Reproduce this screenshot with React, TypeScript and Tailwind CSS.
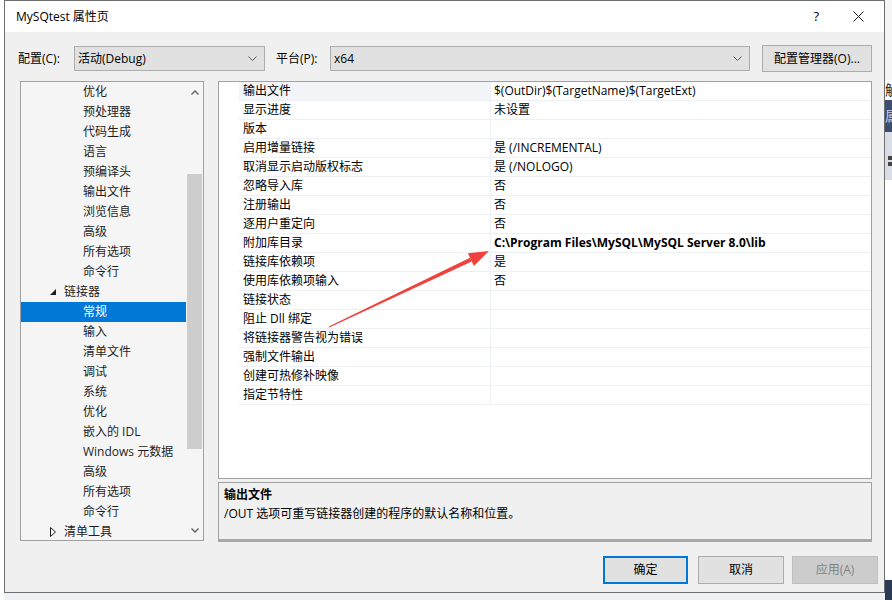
import React from 'react';

type TreeItem = {
  label: string;
  level: 1 | 2;
  selected?: boolean;
  expanded?: boolean;
  collapsed?: boolean;
};

const treeItems: TreeItem[] = [
  { label: '优化', level: 2 },
  { label: '预处理器', level: 2 },
  { label: '代码生成', level: 2 },
  { label: '语言', level: 2 },
  { label: '预编译头', level: 2 },
  { label: '输出文件', level: 2 },
  { label: '浏览信息', level: 2 },
  { label: '高级', level: 2 },
  { label: '所有选项', level: 2 },
  { label: '命令行', level: 2 },
  { label: '链接器', level: 1, expanded: true },
  { label: '常规', level: 2, selected: true },
  { label: '输入', level: 2 },
  { label: '清单文件', level: 2 },
  { label: '调试', level: 2 },
  { label: '系统', level: 2 },
  { label: '优化', level: 2 },
  { label: '嵌入的 IDL', level: 2 },
  { label: 'Windows 元数据', level: 2 },
  { label: '高级', level: 2 },
  { label: '所有选项', level: 2 },
  { label: '命令行', level: 2 },
  { label: '清单工具', level: 1, collapsed: true },
];

const props: [string, string, boolean?][] = [
  ['输出文件', '$(OutDir)$(TargetName)$(TargetExt)'],
  ['显示进度', '未设置'],
  ['版本', ''],
  ['启用增量链接', '是 (/INCREMENTAL)'],
  ['取消显示启动版权标志', '是 (/NOLOGO)'],
  ['忽略导入库', '否'],
  ['注册输出', '否'],
  ['逐用户重定向', '否'],
  ['附加库目录', 'C:\\Program Files\\MySQL\\MySQL Server 8.0\\lib', true],
  ['链接库依赖项', '是'],
  ['使用库依赖项输入', '否'],
  ['链接状态', ''],
  ['阻止 Dll 绑定', ''],
  ['将链接器警告视为错误', ''],
  ['强制文件输出', ''],
  ['创建可热修补映像', ''],
  ['指定节特性', ''],
];

const Chevron = () => (
  <svg width="9" height="5" viewBox="0 0 9 5" className="shrink-0">
    <polyline points="0.5,0.5 4.5,4.5 8.5,0.5" fill="none" stroke="#5a5a5a" strokeWidth="1" />
  </svg>
);

const Combo = ({ text, width }: { text: string; width: string }) => (
  <div className={`${width} shrink-0 h-[25px] flex items-center justify-between bg-[#e1e1e1] border border-[#adadad] pl-[3px] pr-[7px]`}>
    <span>{text}</span>
    <Chevron />
  </div>
);

const TreeRow = ({ item }: { item: TreeItem }) => (
  <div
    className={`h-[20px] leading-[20px] flex items-center whitespace-nowrap ${
      item.selected ? 'bg-[#0078d7] text-white' : 'text-[#1e1e1e]'
    }`}
  >
    {item.level === 1 ? (
      <>
        <div className="pl-[29px] w-[43px] shrink-0 flex items-center">
          {item.expanded ? (
            <svg width="6" height="6" viewBox="0 0 6 6">
              <polygon points="6,0 6,6 0,6" fill="#1e1e1e" />
            </svg>
          ) : (
            <svg width="6" height="10" viewBox="0 0 6 10">
              <polygon points="0.5,0.5 5.5,5 0.5,9.5" fill="none" stroke="#1e1e1e" strokeWidth="1" />
            </svg>
          )}
        </div>
        <span>{item.label}</span>
      </>
    ) : (
      <span className="pl-[62px]">{item.label}</span>
    )}
  </div>
);

const Btn = ({ label, primary, disabled, w, ml }: { label: string; primary?: boolean; disabled?: boolean; w: string; ml: string }) => (
  <div
    className={`${w} ${ml} h-[28px] flex items-center justify-center ${
      primary
        ? 'border-2 border-[#0078d7] bg-[#e1e1e1] text-black'
        : disabled
        ? 'border border-[#bfbfbf] bg-[#cccccc] text-[#838383]'
        : 'border border-[#adadad] bg-[#e1e1e1] text-black'
    }`}
  >
    {label}
  </div>
);

export default function App() {
  return (
    <div className="relative w-[892px] h-[600px] overflow-hidden flex bg-[#f3f3f3] text-[12px] text-black font-['Open_Sans','Noto_Sans_CJK_SC',sans-serif]">
      <div className="w-[4px] h-full bg-white" />

      <div className="flex flex-col">
        {/* dialog */}
        <div className="w-[881px] h-[593px] border border-[#6e6e6e] flex flex-col bg-[#f0f0f0]">
          <div className="h-[31px] bg-white flex items-center pl-[11px] pr-[20px]">
            <span className="flex-1">MySQtest 属性页</span>
            <span className="text-[13px] mr-[34px]">?</span>
            <svg width="11" height="11" viewBox="0 0 11 11">
              <path d="M0.5 0.5 L10.5 10.5 M10.5 0.5 L0.5 10.5" stroke="#1e1e1e" strokeWidth="1" />
            </svg>
          </div>

          <div className="flex items-center h-[27px] mt-[13px] pl-[13px] whitespace-nowrap">
            <span className="w-[56px] shrink-0">配置(C):</span>
            <Combo text="活动(Debug)" width="w-[191px]" />
            <span className="w-[65px] shrink-0 pl-[11px]">平台(P):</span>
            <Combo text="x64" width="w-[420px]" />
            <div className="ml-[12px] shrink-0 w-[110px] h-[27px] flex items-center justify-center bg-[#e1e1e1] border border-[#adadad]">
              配置管理器(O)...
            </div>
          </div>

          <div className="flex mt-[9px] pl-[15px]">
            {/* tree */}
            <div className="w-[184px] h-[460px] border border-[#a0a0a0] bg-[#f5f5f5] flex overflow-hidden">
              <div className="flex-1 overflow-hidden">
                {treeItems.map((it, i) => (
                  <TreeRow key={i} item={it} />
                ))}
              </div>
              <div className="w-[17px] flex flex-col items-center">
                <div className="h-[20px] flex items-center justify-center">
                  <svg width="8" height="5" viewBox="0 0 8 5">
                    <polyline points="0.5,4.5 4,1 7.5,4.5" fill="none" stroke="#606060" strokeWidth="1.4" />
                  </svg>
                </div>
                <div className="h-[72px]" />
                <div className="w-[15px] h-[275px] bg-[#cdcdcd]" />
                <div className="flex-1" />
                <div className="h-[20px] flex items-center justify-center">
                  <svg width="8" height="5" viewBox="0 0 8 5">
                    <polyline points="0.5,0.5 4,4 7.5,0.5" fill="none" stroke="#606060" strokeWidth="1.4" />
                  </svg>
                </div>
              </div>
            </div>

            <div className="ml-[14px] w-[654px] flex flex-col">
              {/* property grid */}
              <div className="h-[398px] border border-[#a0a0a0] bg-white pl-[20px]">
                {props.map(([name, value, bold], i) => (
                  <div key={i} className="h-[19px] flex border-b border-[#edf0f5] whitespace-nowrap">
                    <div className={`w-[252px] pl-[4px] leading-[18px] border-r border-[#edf0f5] ${i === 0 ? 'bg-[#f2f4f8]' : ''}`}>
                      {name}
                    </div>
                    <div className={`flex-1 pl-[3px] leading-[18px] ${bold ? 'font-bold' : ''}`}>{value}</div>
                  </div>
                ))}
              </div>
              {/* description */}
              <div className="mt-[3px] h-[60px] border border-[#a0a0a0] border-b-[3px] border-b-[#a8a8a8] bg-[#f0f0f0] px-[5px] pt-[2px]">
                <div className="font-bold leading-[19px]">输出文件</div>
                <div className="leading-[19px]">/OUT 选项可重写链接器创建的程序的默认名称和位置。</div>
              </div>
            </div>
          </div>

          <div className="flex justify-end mt-[14px] pr-[6px]">
            <Btn label="确定" primary w="w-[85px]" ml="ml-0" />
            <Btn label="取消" w="w-[86px]" ml="ml-[10px]" />
            <Btn label="应用(A)" disabled w="w-[86px]" ml="ml-[8px]" />
          </div>
        </div>
        <div className="flex-1 bg-[#eef0f4]" />
      </div>

      {/* background window strip on the right */}
      <div className="flex-1 flex flex-col bg-white overflow-hidden">
        <div className="h-[80px] bg-[#f5f5f5]" />
        <div className="h-[20px] text-[14px] leading-[20px] text-[#1e1e1e]">解</div>
        <div className="h-[32px] bg-[#3f4d6e] text-[#c8d0e0] text-[14px] leading-[32px]">属</div>
        <div className="h-[48px] bg-[#d9dde6] flex flex-col justify-end pb-[14px] gap-[2px] pl-[3px]">
          <div className="w-[4px] h-[4px] bg-[#444]" />
          <div className="w-[4px] h-[4px] bg-[#444]" />
        </div>
        <div className="flex-1 bg-white" />
        <div className="h-[20px] bg-[#2d3a55]" />
      </div>

      {/* red annotation arrow */}
      <svg className="absolute inset-0 pointer-events-none" width="892" height="600" viewBox="0 0 892 600">
        <polygon points="328.7,327.7 329.3,326.3 470.0,257.8 471.7,261.4" fill="#f0413c" />
        <polygon points="489,251 467.9,253.3 473.9,265.9" fill="#f0413c" />
      </svg>
    </div>
  );
}
